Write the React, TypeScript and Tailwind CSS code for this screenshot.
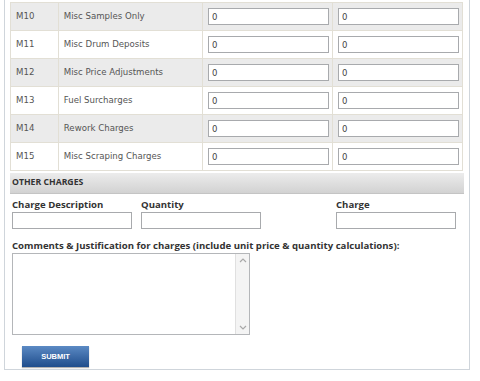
import React from 'react';

const rows = [
  { code: 'M10', label: 'Misc Samples Only' },
  { code: 'M11', label: 'Misc Drum Deposits' },
  { code: 'M12', label: 'Misc Price Adjustments' },
  { code: 'M13', label: 'Fuel Surcharges' },
  { code: 'M14', label: 'Rework Charges' },
  { code: 'M15', label: 'Misc Scraping Charges' },
];

const cellInput =
  'w-[121px] h-[17px] border border-[#a8aaad] bg-white px-[3px] text-[8.5px] text-[#444] outline-none';

const Chevron: React.FC<{ down?: boolean }> = ({ down }) => (
  <svg width="8" height="5" viewBox="0 0 8 5" className="text-[#a9a9a9]">
    <path d={down ? 'M1 1 L4 4 L7 1' : 'M1 4 L4 1 L7 4'} fill="none" stroke="currentColor" strokeWidth="1.2" />
  </svg>
);

const App: React.FC = () => {
  return (
    <div className="w-[480px] h-[381px] bg-white font-[family-name:DejaVu_Sans,sans-serif] overflow-hidden">
      <div className="ml-[4px] w-[466px] h-[370px] border-x border-b border-[#cfd5db] pl-[5px] pr-[6px] pt-[2px]">
        <table className="w-[453px] border-collapse text-[8.6px] text-[#555] font-[family-name:DejaVu_Sans,sans-serif]">
          <tbody>
            {rows.map((r, i) => (
              <tr key={r.code} className={i % 2 === 0 ? 'bg-[#ebebeb]' : 'bg-white'}>
                <td className="w-[48px] h-[28px] border border-[#e2dfd5] pl-[5px]">{r.code}</td>
                <td className="w-[145px] border border-[#e2dfd5] pl-[5px]">{r.label}</td>
                <td className="w-[130px] border border-[#e2dfd5] pl-[5px]">
                  <input className={cellInput} defaultValue="0" />
                </td>
                <td className="w-[130px] border border-[#e2dfd5] pl-[5px]">
                  <input className={cellInput} defaultValue="0" />
                </td>
              </tr>
            ))}
          </tbody>
        </table>

        <div className="mt-[2px] w-[454px] h-[21px] flex items-center pl-[2px] bg-gradient-to-b from-[#ececec] to-[#d2d2d2] border-b border-[#c4c4c4] font-[family-name:Open_Sans,sans-serif] text-[8.7px] font-bold text-[#333]">
          OTHER CHARGES
        </div>

        <div className="mt-[5px] pl-[2px] flex font-[family-name:Open_Sans,sans-serif] text-[9.6px] font-bold text-[#333]">
          <div className="w-[129px] flex flex-col gap-[1px]">
            <span className="leading-[12px]">Charge Description</span>
            <input className="w-[120px] h-[17px] border border-[#a8aaad] outline-none" />
          </div>
          <div className="w-[195px] flex flex-col gap-[1px]">
            <span className="leading-[12px]">Quantity</span>
            <input className="w-[120px] h-[17px] border border-[#a8aaad] outline-none" />
          </div>
          <div className="flex flex-col gap-[1px]">
            <span className="leading-[12px]">Charge</span>
            <input className="w-[120px] h-[17px] border border-[#a8aaad] outline-none" />
          </div>
        </div>

        <div className="mt-[11px] pl-[2px] font-[family-name:Open_Sans,sans-serif] text-[9.6px] font-bold text-[#333] leading-[12px] whitespace-nowrap">
          Comments &amp; Justification for charges (include unit price &amp; quantity calculations):
        </div>
        <div className="ml-[2px] mt-[1px] w-[238px] h-[82px] border border-[#b4b6b9] flex">
          <textarea className="flex-1 resize-none outline-none text-[9px]" />
          <div className="w-[14px] bg-[#f4f4f4] border-l border-[#e0e0e0] flex flex-col justify-between items-center py-[4px]">
            <Chevron />
            <Chevron down />
          </div>
        </div>

        <button className="ml-[12px] mt-[11px] w-[67px] h-[21px] bg-gradient-to-b from-[#5b8ac4] to-[#1f4d8c] text-white text-[7.5px] font-bold font-[family-name:Liberation_Sans,sans-serif] shadow-[0_1px_1px_rgba(0,0,0,0.3)]">
          SUBMIT
        </button>
      </div>
    </div>
  );
};

export default App;
